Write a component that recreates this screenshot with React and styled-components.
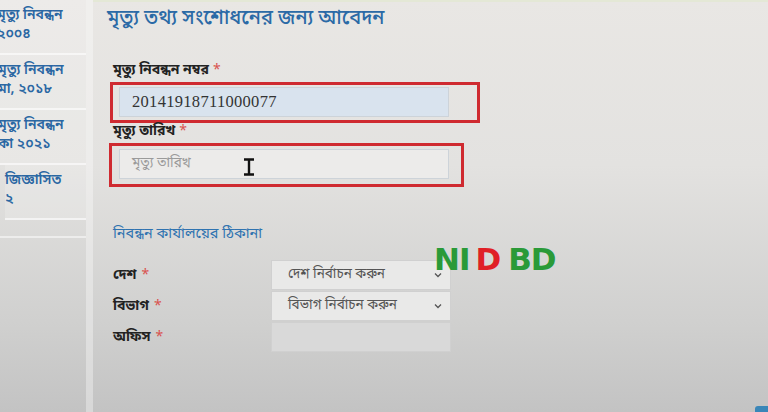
import React from "react";
import styled, { createGlobalStyle } from "styled-components";

const GlobalStyle = createGlobalStyle`
  html, body { margin: 0; padding: 0; }
  body {
    width: 768px;
    height: 412px;
    overflow: hidden;
    font-family: "Noto Sans Bengali", "Noto Sans", "Liberation Sans", sans-serif;
    background: linear-gradient(180deg, #e9e7e4 0%, #e3e2e0 40%, #d0d0cf 78%, #c3c3c3 100%);
  }
`;

const Page = styled.div`
  position: relative;
  display: flex;
  width: 768px;
  height: 412px;
  overflow: hidden;
`;

const Sidebar = styled.div`
  width: 86px;
  flex-shrink: 0;
  border-right: 7px solid rgba(255, 255, 255, 0.35);
  overflow: hidden;
  display: flex;
  flex-direction: column;
`;

const SideItem = styled.div`
  height: 55px;
  box-sizing: border-box;
  padding-top: 6px;
  border-bottom: 2px solid rgba(255, 255, 255, 0.6);
  background: rgba(255, 255, 255, 0.18);
  color: #2a67a3;
  font-size: 14px;
  font-weight: 600;
  line-height: 19px;
  white-space: nowrap;
  margin-left: ${(p) => p.shift || -2}px;
`;

const SideBottom = styled.div`
  height: 16px;
  border-bottom: 2px solid rgba(255, 255, 255, 0.5);
`;

const Main = styled.div`
  flex: 1;
  border-top: 2px solid #e4e8d6;
  padding-left: 14px;
  display: flex;
  flex-direction: column;
`;

const Title = styled.h1`
  margin: 4px 0 0;
  font-size: 20px;
  font-weight: 500;
  color: #2b6aa6;
  line-height: 26px;
`;

const Label = styled.div`
  margin: ${(p) => p.top || 0}px 0 0 6px;
  font-size: 14px;
  font-weight: 700;
  color: #222;
  line-height: 18px;
  span { color: #d9534f; font-weight: 400; margin-left: 4px; }
`;

const Highlight = styled.div`
  width: ${(p) => p.w}px;
  box-sizing: border-box;
  border: 3px solid #cf2a30;
  padding: ${(p) => p.pad};
  margin-left: ${(p) => p.left || 3}px;
  margin-top: 2px;
`;

const TextInput = styled.div`
  width: 330px;
  height: 30px;
  box-sizing: border-box;
  border: 1px solid #cdd3d9;
  background: ${(p) => (p.filled ? "#d9e3ee" : "#ecebea")};
  color: ${(p) => (p.filled ? "#333" : "#9a9a9a")};
  font-family: ${(p) => (p.filled ? '"Liberation Serif", serif' : "inherit")};
  font-size: ${(p) => (p.filled ? 16.5 : 13.5)}px;
  letter-spacing: ${(p) => (p.filled ? 0.3 : 0)}px;
  display: flex;
  align-items: center;
  padding-left: 12px;
`;

const Section = styled.div`
  margin: 38px 0 0 6px;
  font-size: 14.5px;
  color: #2f73b0;
`;

const SelectRows = styled.div`
  margin-top: 16px;
  display: flex;
  flex-direction: column;
  gap: 1px;
`;

const Row = styled.div`
  display: grid;
  grid-template-columns: 164px 180px;
  align-items: center;
`;

const RowLabel = styled.div`
  padding-left: 6px;
  font-size: 14px;
  font-weight: 700;
  color: #222;
  span { color: #d9534f; font-weight: 400; margin-left: 5px; }
`;

const Select = styled.div`
  height: 30px;
  box-sizing: border-box;
  border: 1px solid #d0d0d0;
  background: ${(p) => (p.disabled ? "#d9d9d9" : "#e9e9e8")};
  color: #555;
  font-size: 13.5px;
  display: flex;
  align-items: center;
  justify-content: space-between;
  padding: 0 8px 0 16px;
`;

const Watermark = styled.div`
  position: absolute;
  left: 434px;
  top: 241px;
  font-family: "DejaVu Sans", sans-serif;
  font-weight: 700;
  font-size: 31px;
  letter-spacing: -1px;
  color: #2a9a38;
  b { color: #e01f26; margin: 0 8px 0 6px; }
`;

const Cursor = styled.svg`
  position: absolute;
  left: 243px;
  top: 158px;
`;

const Corner = styled.div`
  position: absolute;
  right: 0;
  bottom: 0;
  width: 13px;
  height: 6px;
  background: #3a86b8;
  border-top-left-radius: 3px;
`;

const Chevron = () => (
  <svg width="8" height="6" viewBox="0 0 8 6">
    <path d="M1 1.5 L4 4.5 L7 1.5" fill="none" stroke="#555" strokeWidth="1.3" />
  </svg>
);

export default function App() {
  return (
    <>
      <GlobalStyle />
      <Page>
        <Sidebar>
          <SideItem shift={-3}>মৃত্যু নিবন্ধন<br />২০০৪</SideItem>
          <SideItem shift={-2}>মৃত্যু নিবন্ধন<br />মা, ২০১৮</SideItem>
          <SideItem shift={-2}>মৃত্যু নিবন্ধন<br />কা ২০২১</SideItem>
          <SideItem shift={5}>জিজ্ঞাসিত<br />২</SideItem>
          <SideBottom />
        </Sidebar>
        <Main>
          <Title>মৃত্যু তথ্য সংশোধনের জন্য আবেদন</Title>
          <Label top={30}>মৃত্যু নিবন্ধন নম্বর<span>*</span></Label>
          <Highlight w={370} left={3} pad="2px 0 3px 6px">
            <TextInput filled>20141918711000077</TextInput>
          </Highlight>
          <Label top={0}>মৃত্যু তারিখ<span>*</span></Label>
          <Highlight w={355} left={2} pad="3px 0 5px 7px">
            <TextInput>মৃত্যু তারিখ</TextInput>
          </Highlight>
          <Section>নিবন্ধন কার্যালয়ের ঠিকানা</Section>
          <SelectRows>
            <Row>
              <RowLabel>দেশ<span>*</span></RowLabel>
              <Select>দেশ নির্বাচন করুন <Chevron /></Select>
            </Row>
            <Row>
              <RowLabel>বিভাগ<span>*</span></RowLabel>
              <Select>বিভাগ নির্বাচন করুন <Chevron /></Select>
            </Row>
            <Row>
              <RowLabel>অফিস<span>*</span></RowLabel>
              <Select disabled />
            </Row>
          </SelectRows>
        </Main>
        <Cursor width="12" height="18" viewBox="0 0 12 18">
          <path d="M1 1.5 H11 M6 1.5 V16.5 M1 16.5 H11" stroke="#111" strokeWidth="2.4" fill="none" />
        </Cursor>
        <Watermark>NI<b>D</b>BD</Watermark>
        <Corner />
      </Page>
    </>
  );
}
